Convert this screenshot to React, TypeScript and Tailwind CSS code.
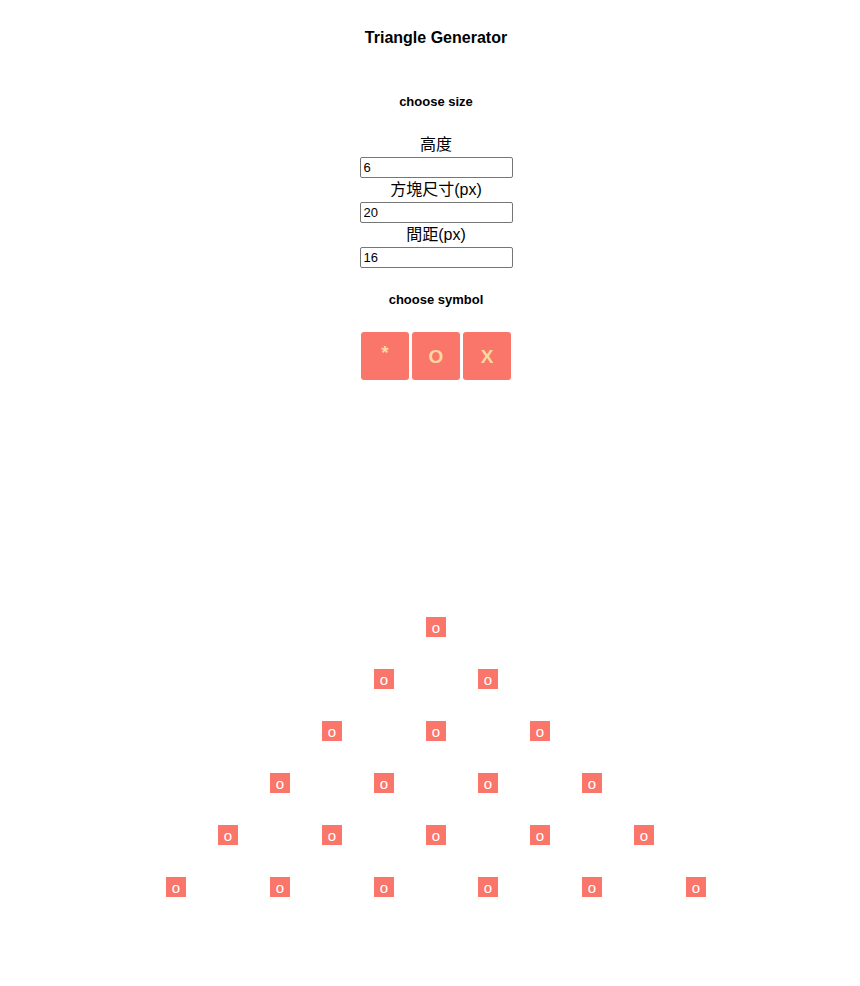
import { useState } from "react";

const FONT = { fontFamily: '"Liberation Sans", "Noto Sans CJK TC", sans-serif' };

export default function App() {
  const [height, setHeight] = useState("6");
  const [size, setSize] = useState("20");
  const [gap, setGap] = useState("16");
  const [symbol, setSymbol] = useState("o");

  const rows = Number(height) || 0;

  return (
    <div className="flex w-full flex-col items-center bg-white pl-3 text-black" style={FONT}>
      <h3 className="mt-[27px] text-[16px] font-bold leading-[22px]">Triangle Generator</h3>

      <h5 className="mt-[45px] text-[13px] font-bold leading-[16px]">choose size</h5>

      <div className="mt-[23px] flex flex-col items-center">
        <label className="text-[16px] leading-[24px]">高度</label>
        <input
          value={height}
          onChange={(e) => setHeight(e.target.value)}
          className="h-[21px] w-[153px] rounded-[2px] border border-[#767676] px-[3px] text-[13px]"
        />
        <label className="text-[16px] leading-[24px]">方塊尺寸(px)</label>
        <input
          value={size}
          onChange={(e) => setSize(e.target.value)}
          className="h-[21px] w-[153px] rounded-[2px] border border-[#767676] px-[3px] text-[13px]"
        />
        <label className="text-[16px] leading-[24px]">間距(px)</label>
        <input
          value={gap}
          onChange={(e) => setGap(e.target.value)}
          className="h-[21px] w-[153px] rounded-[2px] border border-[#767676] px-[3px] text-[13px]"
        />
      </div>

      <h5 className="mt-[24px] text-[13px] font-bold leading-[16px]">choose symbol</h5>

      <div className="mt-[24px] flex gap-[3px]">
        {["*", "o", "x"].map((s) => (
          <button
            key={s}
            onClick={() => setSymbol(s)}
            className="flex h-[48px] w-[48px] items-center justify-center rounded-[3px] bg-[#fa766a] text-[19px] font-bold uppercase text-[#fcd9a0]"
          >
            {s === "*" ? <span className="-mt-[6px]">*</span> : <span className="mt-[2px]">{s}</span>}
          </button>
        ))}
      </div>

      <div className="mt-[221px] mb-[73px] flex flex-col items-center">
        {Array.from({ length: rows }, (_, i) => (
          <div key={i} className="flex justify-center">
            {Array.from({ length: 2 * i + 1 }, (_, j) => (
              <div key={j} className="h-[52px] w-[52px] p-[16px]">
                {j % 2 === 0 && (
                  <div className="flex h-[20px] w-[20px] items-center justify-center bg-[#fa766a] pt-[1px] text-[15px] leading-none text-white">
                    {symbol}
                  </div>
                )}
              </div>
            ))}
          </div>
        ))}
      </div>
    </div>
  );
}
